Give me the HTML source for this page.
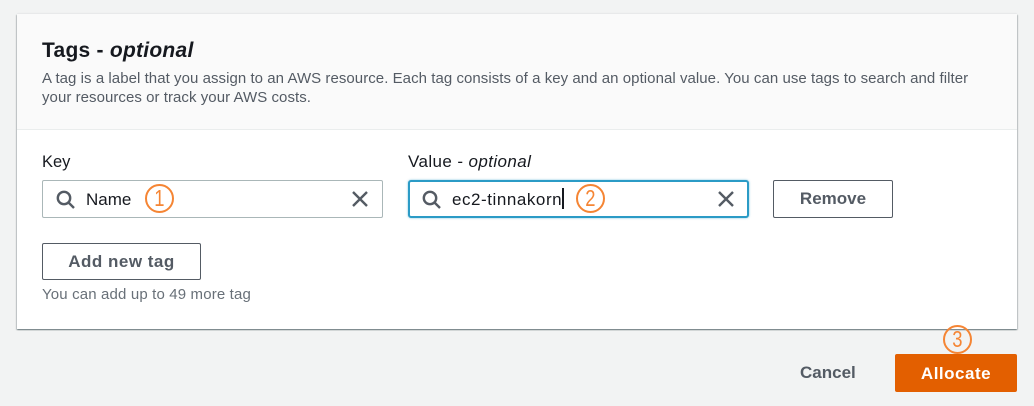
<!DOCTYPE html>
<html><head><meta charset="utf-8"><style>
html,body{margin:0;padding:0}
body{width:1034px;height:406px;background:#f2f3f3;position:relative;overflow:hidden;font-family:"Liberation Sans","Noto Sans CJK JP",sans-serif;color:#16191f}
.a{position:absolute;white-space:nowrap}
#card{left:17px;top:14px;width:1000px;height:315px;background:#fff;box-shadow:0 1px 1px 0 rgba(0,28,36,.35),1px 1px 1px 0 rgba(0,28,36,.18),-1px 1px 1px 0 rgba(0,28,36,.18),0 -1px 1px 0 rgba(0,28,36,.05)}
#head{left:17px;top:14px;width:1000px;height:115px;background:#fafafa;border-bottom:1px solid #eaeded}
.box{box-sizing:border-box;background:#fff;border:1px solid #aab7b8;border-radius:2px}
.btn{box-sizing:border-box;background:#fff;border:1px solid #545b64;border-radius:2px;color:#545b64;font-weight:700;font-size:17px;text-align:center}
.num{font-size:23px;color:#f58534;text-align:center;box-sizing:border-box;width:29px;height:29px;border:2.5px solid #f58534;border-radius:50%;line-height:25px;font-weight:400}
.num span{display:inline-block;transform:scaleX(.8)}
</style></head><body>
<div class="a" id="card"></div>
<div class="a" id="head"></div>
<div class="a" style="left:42px;top:38px;font-size:21px;line-height:26px;font-weight:700;letter-spacing:.25px">Tags - <i>optional</i></div>
<div class="a" style="left:42px;top:69px;font-size:15px;line-height:19px;color:#545b64;letter-spacing:.05px">A tag is a label that you assign to an AWS resource. Each tag consists of a key and an optional value. You can use tags to search and filter<br>your resources or track your AWS costs.</div>

<div class="a" style="left:42px;top:152px;font-size:16.5px;line-height:20px">Key</div>
<div class="a box" style="left:42px;top:180px;width:341px;height:38px"></div>
<svg class="a" style="left:55px;top:189px" width="21" height="21" viewBox="0 0 21 21" fill="none" stroke="#545b64" stroke-width="2.4"><circle cx="9" cy="9" r="6.2"/><path d="M13.5 13.5l5.5 5.5"/></svg>
<div class="a" style="left:86px;top:190px;font-size:17px;line-height:20px">Name</div>
<div class="a num" style="left:145px;top:184px"><span>1</span></div>
<svg class="a" style="left:350px;top:189px" width="20" height="20" viewBox="0 0 20 20" fill="none" stroke="#545b64" stroke-width="2.4"><path d="M3 3l14 14M17 3L3 17"/></svg>

<div class="a" style="left:408px;top:152px;font-size:17px;line-height:20px;letter-spacing:.4px">Value - <i>optional</i></div>
<div class="a box" style="left:408px;top:180px;width:341px;height:38px;border:2px solid #2b9bc6;border-radius:3px;box-shadow:0 0 2px rgba(43,155,198,.6)"></div>
<svg class="a" style="left:421px;top:189px" width="21" height="21" viewBox="0 0 21 21" fill="none" stroke="#545b64" stroke-width="2.4"><circle cx="9" cy="9" r="6.2"/><path d="M13.5 13.5l5.5 5.5"/></svg>
<div class="a" style="left:452px;top:190px;font-size:17px;line-height:20px;letter-spacing:.55px">ec2-tinnakorn</div>
<div class="a" style="left:562px;top:188px;width:2px;height:21px;background:#16191f"></div>
<div class="a num" style="left:576px;top:184px"><span>2</span></div>
<svg class="a" style="left:716px;top:189px" width="20" height="20" viewBox="0 0 20 20" fill="none" stroke="#545b64" stroke-width="2.4"><path d="M3 3l14 14M17 3L3 17"/></svg>

<div class="a btn" style="left:773px;top:180px;width:120px;height:38px;line-height:35px">Remove</div>
<div class="a btn" style="left:42px;top:243px;width:159px;height:37px;line-height:35px;letter-spacing:.5px">Add new tag</div>
<div class="a" style="left:42px;top:286px;font-size:15px;line-height:18px;color:#687078;letter-spacing:.15px">You can add up to 49 more tag</div>

<div class="a" style="left:800px;top:363px;font-size:17px;line-height:20px;font-weight:700;color:#545b64">Cancel</div>
<div class="a" style="left:895px;top:354px;width:122px;height:38px;background:#e35f00;border-radius:2px;color:#fff;font-weight:700;font-size:17px;line-height:39px;text-align:center;letter-spacing:.5px">Allocate</div>
<div class="a num" style="left:943px;top:325px"><span>3</span></div>
</body></html>
